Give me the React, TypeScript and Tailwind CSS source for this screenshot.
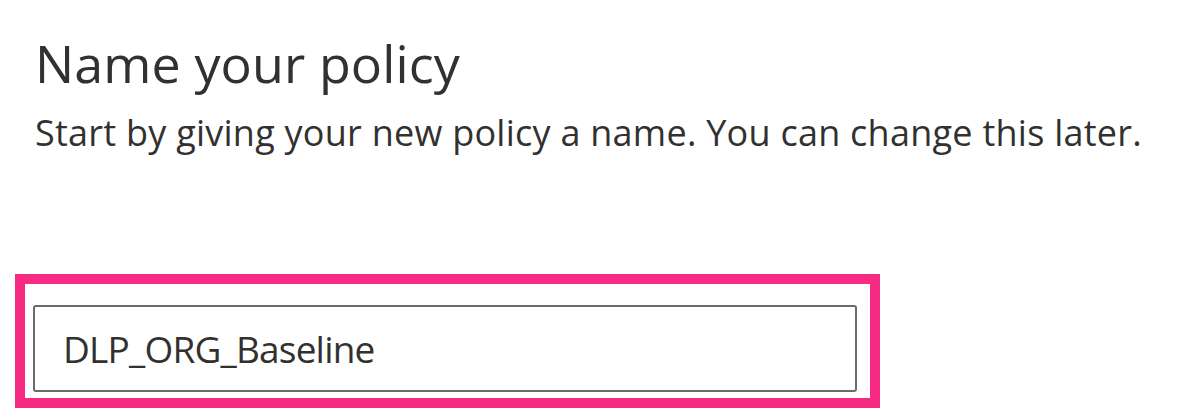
import React from "react";

export default function App() {
  return (
    <div className="w-[1177px] h-[409px] bg-white overflow-hidden text-[#323130]" style={{ fontFamily: '"Open Sans", "Noto Sans", sans-serif' }}>
      <div className="pl-[35px] pt-[33px]">
        <h1 className="text-[52px] leading-[60px] font-normal tracking-[0.1px]">Name your policy</h1>
        <p className="mt-[18px] text-[36px] leading-[44px] tracking-[0.25px]">Start by giving your new policy a name. You can change this later.</p>
      </div>
      <div className="ml-[15px] mt-[119px] w-[865px] h-[134px] border-[10px] border-[#f72b84] pl-[8px] pt-[21px]">
        <div className="w-[824px] h-[87px] border-2 border-[#6b6b6b] rounded-[3px] flex items-center pl-[28px]">
          <span className="text-[37px] tracking-[-0.8px]">DLP_ORG_Baseline</span>
        </div>
      </div>
    </div>
  );
}
